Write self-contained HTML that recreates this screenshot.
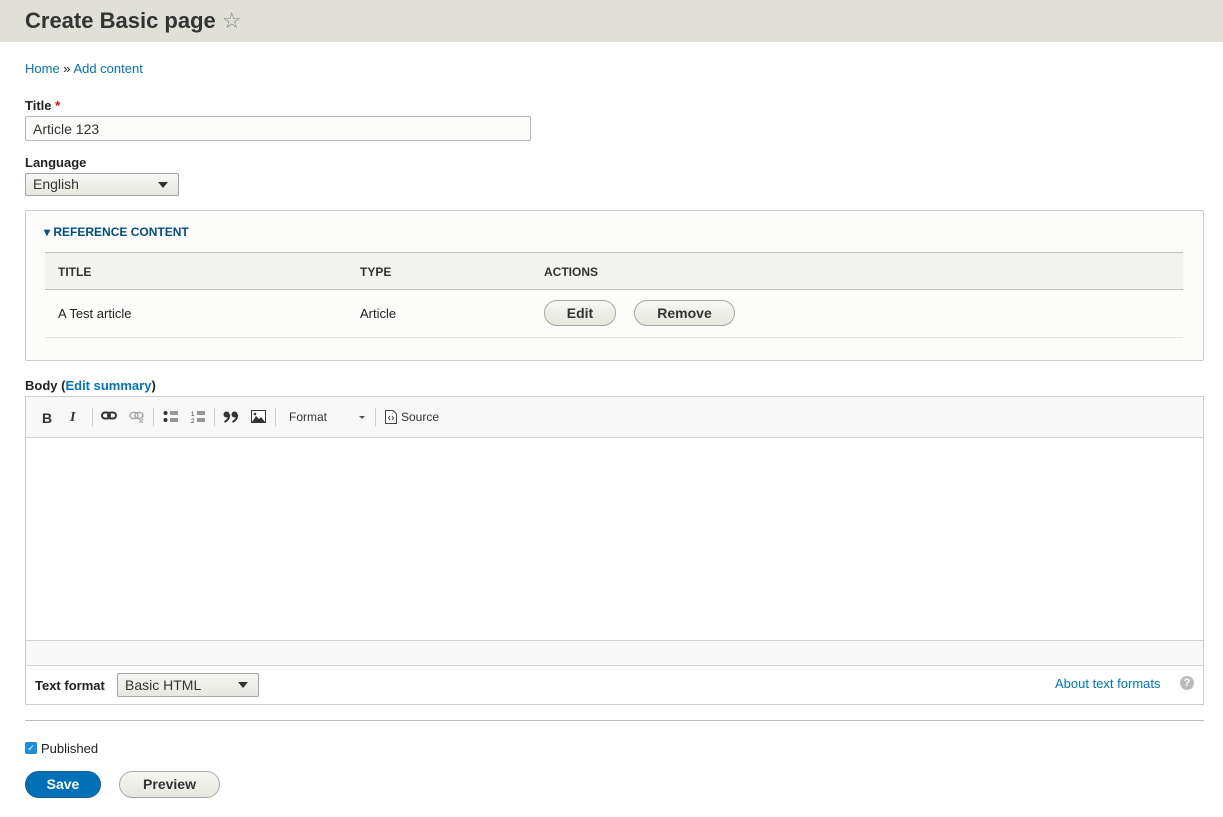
<!DOCTYPE html>
<html><head><meta charset="utf-8"><style>
*{box-sizing:border-box;margin:0;padding:0}
body{width:1223px;height:817px;background:#fff;font-family:"Liberation Sans",sans-serif;color:#222;font-size:13px;position:relative;overflow:hidden}
.a{position:absolute}
a{color:#0074bd;text-decoration:none}
.lbl{font-weight:bold;font-size:13px;color:#222}
.btn{position:absolute;border:1px solid #a6a6a6;border-radius:20px;background:linear-gradient(#f6f6f3,#e7e7df);font-weight:bold;font-size:14px;color:#333;text-align:center}
.sel{position:absolute;border:1px solid #a6a6a6;border-radius:2px;background:linear-gradient(#f6f6f3,#e7e7df);font-size:14px;color:#333;padding-left:7px}
.sel:after{content:"";position:absolute;right:10px;top:8px;border:5px solid transparent;border-top:6px solid #333;border-bottom:0}
.th{position:absolute;top:265px;font-weight:bold;font-size:12px;color:#333}
.ic{position:absolute;top:410px;font-size:14px;color:#333}
.sep{position:absolute;top:408px;width:1px;height:18px;background:#ccc}
</style></head><body>
<div class="a" style="left:0;top:0;width:1223px;height:42px;background:#e0e0d8"></div>
<div class="a" style="left:25px;top:8px;font-size:22px;font-weight:bold;color:#333">Create Basic page <span style="font-weight:normal;color:#888">☆</span></div>
<div class="a" style="left:25px;top:61px"><a>Home</a> » <a>Add content</a></div>
<div class="a lbl" style="left:25px;top:98px">Title <span style="color:#e00">*</span></div>
<div class="a" style="left:25px;top:116px;width:506px;height:25px;border:1px solid #b8b8b8;border-radius:2px;background:#fcfcfa;font-size:14px;padding:4px 7px;color:#333">Article 123</div>
<div class="a lbl" style="left:25px;top:155px">Language</div>
<div class="sel" style="left:25px;top:173px;width:154px;height:23px;line-height:21px">English</div>
<div class="a" style="left:25px;top:210px;width:1179px;height:151px;border:1px solid #ccc;border-radius:2px;background:#fcfcfa"></div>
<div class="a" style="left:44px;top:225px;font-size:12px;font-weight:bold;color:#004f80">▾ REFERENCE CONTENT</div>
<div class="a" style="left:45px;top:252px;width:1138px;height:38px;background:#f3f3ef;border-top:1px solid #bfbfba;border-bottom:1px solid #bfbfba"></div>
<div class="th" style="left:58px">TITLE</div><div class="th" style="left:360px">TYPE</div><div class="th" style="left:544px">ACTIONS</div>
<div class="a" style="left:45px;top:337px;width:1138px;height:1px;background:#e6e4df"></div>
<div class="a" style="left:58px;top:306px;color:#222">A Test article</div>
<div class="a" style="left:360px;top:306px;color:#222">Article</div>
<div class="btn" style="left:544px;top:300px;width:72px;height:26px;line-height:24px">Edit</div>
<div class="btn" style="left:634px;top:300px;width:101px;height:26px;line-height:24px">Remove</div>
<div class="a lbl" style="left:25px;top:378px">Body (<a>Edit summary</a>)</div>
<div class="a" style="left:25px;top:396px;width:1179px;height:309px;border:1px solid #ccc;background:#fff"></div>
<div class="a" style="left:26px;top:397px;width:1177px;height:41px;background:#f8f8f8;border-bottom:1px solid #d1d1d1"></div>
<div class="ic" style="left:42px;font-weight:bold">B</div>
<div class="ic" style="left:70px;font-style:italic;font-weight:bold;font-family:'Liberation Serif',serif">I</div>
<div class="sep" style="left:92px"></div>
<svg class="a" style="left:101px;top:411px" width="16" height="10"><rect x="1" y="1.5" width="8" height="6" rx="3" fill="none" stroke="#333" stroke-width="2"/><rect x="7" y="1.5" width="8" height="6" rx="3" fill="none" stroke="#333" stroke-width="2"/></svg>
<svg class="a" style="left:129px;top:411px" width="16" height="12"><rect x="1" y="1.5" width="8" height="6" rx="3" fill="none" stroke="#aaa" stroke-width="1.5"/><rect x="6" y="1.5" width="8" height="6" rx="3" fill="none" stroke="#aaa" stroke-width="1.5"/><path d="M10 8l4 4M14 8l-4 4" stroke="#aaa"/></svg>
<div class="sep" style="left:153px"></div>
<svg class="a" style="left:163px;top:410px" width="16" height="14"><circle cx="2.5" cy="3" r="2" fill="#333"/><circle cx="2.5" cy="10" r="2" fill="#333"/><path d="M7 2h8M7 4h8M7 9h8M7 11h8" stroke="#333"/></svg>
<svg class="a" style="left:191px;top:410px" width="16" height="14"><text x="0" y="6" font-size="6" fill="#333" font-family="Liberation Sans">1</text><text x="0" y="13" font-size="6" fill="#333" font-family="Liberation Sans">2</text><path d="M6 2h8M6 4h8M6 9h8M6 11h8" stroke="#333"/></svg>
<div class="sep" style="left:214px"></div>
<svg class="a" style="left:223px;top:411px" width="16" height="12"><circle cx="3.5" cy="3.5" r="3" fill="#333"/><path d="M6.3 3.5C6.3 7 4.5 9.5 1.5 11" stroke="#333" stroke-width="2" fill="none"/><circle cx="11.5" cy="3.5" r="3" fill="#333"/><path d="M14.3 3.5C14.3 7 12.5 9.5 9.5 11" stroke="#333" stroke-width="2" fill="none"/></svg>
<svg class="a" style="left:251px;top:410px" width="15" height="13"><rect x="0.5" y="0.5" width="14" height="12" fill="#fff" stroke="#333"/><path d="M1 12 L5 6 L8 9 L10 7 L14 12Z" fill="#333"/><circle cx="4" cy="4" r="1.3" fill="#333"/></svg>
<div class="sep" style="left:275px"></div>
<div class="a" style="left:289px;top:410px;font-size:12px;color:#333">Format</div>
<div class="a" style="left:359px;top:416px;border:3px solid transparent;border-top:3px solid #555"></div>
<div class="sep" style="left:375px"></div>
<svg class="a" style="left:385px;top:410px" width="12" height="14"><path d="M0.5 0.5H8L11.5 4V13.5H0.5Z" fill="#fff" stroke="#444"/><path d="M5 6L3.5 8L5 10M7 6L8.5 8L7 10" fill="none" stroke="#444"/></svg>
<div class="a" style="left:401px;top:410px;font-size:12px;color:#333">Source</div>
<div class="a" style="left:26px;top:640px;width:1177px;height:26px;background:#f8f8f8;border-top:1px solid #d1d1d1;border-bottom:1px solid #d1d1d1"></div>
<div class="a lbl" style="left:35px;top:678px">Text format</div>
<div class="sel" style="left:117px;top:673px;width:142px;height:24px;line-height:22px">Basic HTML</div>
<div class="a" style="left:1055px;top:676px"><a>About text formats</a></div>
<div class="a" style="left:1180px;top:676px;width:14px;height:14px;border-radius:50%;background:#bbb;color:#fff;font-size:11px;font-weight:bold;text-align:center;line-height:14px">?</div>
<div class="a" style="left:25px;top:720px;width:1179px;height:1px;background:#bbb"></div>
<div class="a" style="left:25px;top:742px;width:12px;height:12px;border-radius:2px;background:#1a8ee1;color:#fff;font-size:9px;text-align:center;line-height:12px">✓</div>
<div class="a" style="left:41px;top:741px;color:#222">Published</div>
<div class="a" style="left:25px;top:771px;width:76px;height:27px;border-radius:20px;background:#0071b8;border:1px solid #1e5c90;color:#fff;font-weight:bold;font-size:14px;text-align:center;line-height:25px">Save</div>
<div class="btn" style="left:119px;top:771px;width:101px;height:27px;line-height:25px">Preview</div>
</body></html>
